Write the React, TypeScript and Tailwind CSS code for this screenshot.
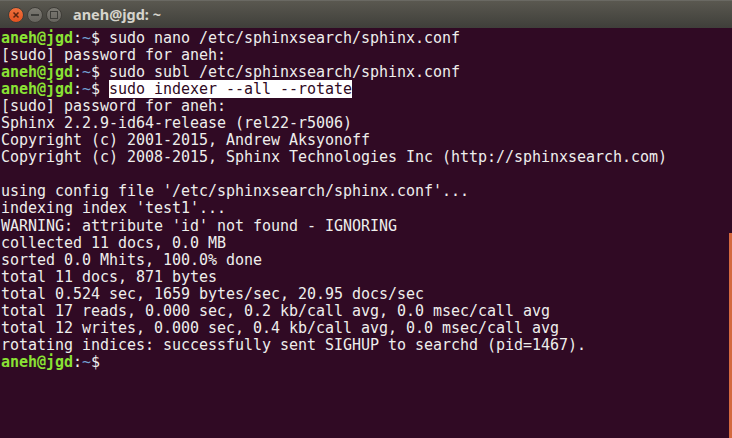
import React from 'react';

const output = [
  "using config file '/etc/sphinxsearch/sphinx.conf'...",
  "indexing index 'test1'...",
  "WARNING: attribute 'id' not found - IGNORING",
  'collected 11 docs, 0.0 MB',
  'sorted 0.0 Mhits, 100.0% done',
  'total 11 docs, 871 bytes',
  'total 0.524 sec, 1659 bytes/sec, 20.95 docs/sec',
  'total 17 reads, 0.000 sec, 0.2 kb/call avg, 0.0 msec/call avg',
  'total 12 writes, 0.000 sec, 0.4 kb/call avg, 0.0 msec/call avg',
  'rotating indices: successfully sent SIGHUP to searchd (pid=1467).',
];

const Line: React.FC<{ children?: React.ReactNode }> = ({ children }) => (
  <div className="h-[17.05px] whitespace-pre">{children}</div>
);

const Prompt = () => (
  <>
    <span className="font-bold text-[#8ae234]">aneh@jgd</span>
    <span>:</span>
    <span className="text-[#729fcf]">~</span>
    <span>$ </span>
  </>
);

const WindowButton: React.FC<{ className: string; children?: React.ReactNode }> = ({ className, children }) => (
  <div className={`flex h-[16px] w-[16px] items-center justify-center rounded-full border ${className}`}>{children}</div>
);

export default function App() {
  return (
    <div className="flex h-[438px] w-[732px] flex-col overflow-hidden bg-[#300a24] font-['Liberation_Sans',sans-serif]">
      <div className="flex h-[28px] shrink-0 items-center gap-[3px] border-t border-[#6a6963] bg-gradient-to-b from-[#5a5850] to-[#3f3f3a] pl-[8px]">
        <WindowButton className="border-[#3f3d38] bg-gradient-to-b from-[#f0703c] to-[#e2521f]">
          <svg width="8" height="8" viewBox="0 0 8 8">
            <path d="M1.5 1.5l5 5M6.5 1.5l-5 5" stroke="#5a2410" strokeWidth="1.5" />
          </svg>
        </WindowButton>
        <WindowButton className="border-[#3f3d38] bg-gradient-to-b from-[#7c7a73] to-[#66645e]">
          <div className="h-[2px] w-[8px] bg-[#3c3c38]" />
        </WindowButton>
        <WindowButton className="border-[#3f3d38] bg-gradient-to-b from-[#7c7a73] to-[#66645e]">
          <div className="h-[8px] w-[8px] border border-[#3c3c38]" />
        </WindowButton>
        <div className="ml-[8px] font-['Noto_Sans',sans-serif] text-[14.5px] font-bold text-[#d6d4cc]">aneh@jgd: ~</div>
      </div>
      <div className="flex min-h-0 flex-1">
        <div className="flex-1 pl-[1px] pt-[2px] font-['DejaVu_Sans_Mono',monospace] text-[15px] leading-[17px] tracking-[-0.03px] text-[#eeeeec]">
          <Line><Prompt />sudo nano /etc/sphinxsearch/sphinx.conf</Line>
          <Line>[sudo] password for aneh:</Line>
          <Line><Prompt />sudo subl /etc/sphinxsearch/sphinx.conf</Line>
          <Line><Prompt /><span className="bg-white text-[#300a24]">sudo indexer --all --rotate</span></Line>
          <Line>[sudo] password for aneh:</Line>
          <Line>Sphinx 2.2.9-id64-release (rel22-r5006)</Line>
          <Line>Copyright (c) 2001-2015, Andrew Aksyonoff</Line>
          <Line>Copyright (c) 2008-2015, Sphinx Technologies Inc (http://sphinxsearch.com)</Line>
          <Line />
          {output.map((text) => (
            <Line key={text}>{text}</Line>
          ))}
          <Line><Prompt /></Line>
        </div>
        <div className="flex w-[3px] shrink-0 flex-col pt-[205px]">
          <div className="flex-1 bg-[#d4693f]" />
        </div>
      </div>
    </div>
  );
}
